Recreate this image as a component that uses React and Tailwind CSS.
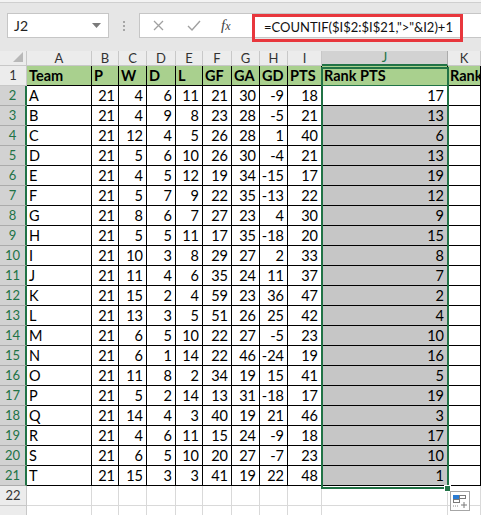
import React from 'react'

const widths = [27, 65, 27, 28, 29, 27, 29, 28, 28, 34, 126, 33]
const letters = ['A', 'B', 'C', 'D', 'E', 'F', 'G', 'H', 'I', 'J', 'K']

const rows = [
  ['A', 21, 4, 6, 11, 21, 30, -9, 18, 17],
  ['B', 21, 4, 9, 8, 23, 28, -5, 21, 13],
  ['C', 21, 12, 4, 5, 26, 28, 1, 40, 6],
  ['D', 21, 5, 6, 10, 26, 30, -4, 21, 13],
  ['E', 21, 4, 5, 12, 19, 34, -15, 17, 19],
  ['F', 21, 5, 7, 9, 22, 35, -13, 22, 12],
  ['G', 21, 8, 6, 7, 27, 23, 4, 30, 9],
  ['H', 21, 5, 5, 11, 17, 35, -18, 20, 15],
  ['I', 21, 10, 3, 8, 29, 27, 2, 33, 8],
  ['J', 21, 11, 4, 6, 35, 24, 11, 37, 7],
  ['K', 21, 15, 2, 4, 59, 23, 36, 47, 2],
  ['L', 21, 13, 3, 5, 51, 26, 25, 42, 4],
  ['M', 21, 6, 5, 10, 22, 27, -5, 23, 10],
  ['N', 21, 6, 1, 14, 22, 46, -24, 19, 16],
  ['O', 21, 11, 8, 2, 34, 19, 15, 41, 5],
  ['P', 21, 5, 2, 14, 13, 31, -18, 17, 19],
  ['Q', 21, 14, 4, 3, 40, 19, 21, 46, 3],
  ['R', 21, 4, 6, 11, 15, 24, -9, 18, 17],
  ['S', 21, 6, 5, 10, 20, 27, -7, 23, 10],
  ['T', 21, 15, 3, 3, 41, 19, 22, 48, 1],
]

const headers = ['Team', 'P', 'W', 'D', 'L', 'GF', 'GA', 'GD', 'PTS', 'Rank PTS', 'Rank']

function Toolbar() {
  return (
    <div className="h-[51px] bg-[#e6e6e6] relative shrink-0">
      <div className="h-[3px] bg-[#f3f3f3] border-b border-[#cfcfcf]" />
      <div className="flex items-start pt-[10px]">
        <div className="ml-[7px] w-[102px] h-[25px] bg-white border border-[#c6c6c6] flex items-center justify-between pl-[6px] pr-[7px]">
          <span className="text-[14px] text-[#222]">J2</span>
          <svg width="9" height="5" viewBox="0 0 9 5"><path d="M0 0h9L4.5 5z" fill="#7a7a7a" /></svg>
        </div>
        <div className="w-[30px] h-[25px] flex flex-col items-center justify-center gap-[2px]">
          <span className="w-[2px] h-[2px] bg-[#a6a6a6]" />
          <span className="w-[2px] h-[2px] bg-[#a6a6a6]" />
          <span className="w-[2px] h-[2px] bg-[#a6a6a6]" />
        </div>
        <div className="flex-1 h-[25px] bg-white border-y border-l border-[#c6c6c6] flex items-center">
          <svg className="ml-[13px]" width="11" height="11" viewBox="0 0 11 11"><path d="M1 1l9 9M10 1l-9 9" stroke="#a0a0a0" strokeWidth="1.3" /></svg>
          <svg className="ml-[23px]" width="14" height="11" viewBox="0 0 14 11"><path d="M1 6l4 4 8-9" stroke="#a0a0a0" strokeWidth="1.4" fill="none" /></svg>
          <span className="ml-[20px] italic text-[15px] text-[#444] [font-family:'Liberation_Serif',serif]">f<span className="text-[12px]">x</span></span>
        </div>
      </div>
      <div className="absolute left-[252px] top-[14px] w-[211px] h-[28px] border-[3px] border-[#e8373d] flex items-center pl-[9px]">
        <span className="text-[13px] text-[#111] whitespace-nowrap">=COUNTIF($I$2:$I$21,"&gt;"&amp;I2)+1</span>
      </div>
    </div>
  )
}

function ColHeaders() {
  return (
    <div className="flex h-[17px]">
      <div className="w-[27px] shrink-0 bg-[#ececec] border-r border-b border-[#c8c8c8] relative">
        <svg className="absolute right-[3px] bottom-[3px]" width="10" height="10" viewBox="0 0 10 10"><path d="M10 0v10H0z" fill="#b8b8b8" /></svg>
      </div>
      {letters.map((l, i) => (
        <div
          key={l}
          style={{ width: widths[i + 1] }}
          className={
            'shrink-0 border-r flex items-center justify-center text-[13px] leading-none ' +
            (l === 'J'
              ? 'bg-[#d2d2d2] border-[#ababab] border-b-2 border-b-[#217346] text-[#217346]'
              : 'bg-[#ececec] border-[#c8c8c8] border-b text-[#333]')
          }
        >
          {l}
        </div>
      ))}
    </div>
  )
}

function RowHeader({ n, selected }) {
  return (
    <div
      className={
        'w-[27px] shrink-0 flex items-center justify-center text-[13px] border-b ' +
        (selected
          ? 'bg-[#d2d2d2] border-[#ababab] border-r-2 border-r-[#217346] text-[#217346]'
          : 'bg-[#ececec] border-[#c8c8c8] border-r text-[#333]')
      }
    >
      {n}
    </div>
  )
}

function TableRow({ n, cells, header }) {
  return (
    <div className="flex h-[20px]">
      <RowHeader n={n} selected={!header} />
      {cells.map((c, i) => {
        const isJ = i === 9
        let bg = 'bg-white'
        if (header) bg = 'bg-[#a9d08e]'
        else if (isJ && n !== 2) bg = 'bg-[#c6c6c6]'
        const align = header || i === 0 ? 'justify-start pl-[2px]' : 'justify-end pr-[3px]'
        const bottom = header && isJ ? 'border-b-[#217346]' : 'border-b-black'
        return (
          <div
            key={i}
            style={{ width: widths[i + 1] }}
            className={
              'shrink-0 flex items-center overflow-hidden whitespace-nowrap border-r border-b border-r-black text-[14.5px] text-black ' +
              bottom + ' ' + bg + ' ' + align + (header ? ' font-bold' : '')
            }
          >
            {c}
          </div>
        )
      })}
    </div>
  )
}

function EmptyRow({ n }) {
  return (
    <div className="flex h-[20px] shrink-0">
      <RowHeader n={n} />
      {widths.slice(1).map((w, i) => (
        <div key={i} style={{ width: w }} className="shrink-0 border-r border-b border-[#d9d9d9]" />
      ))}
    </div>
  )
}

export default function App() {
  return (
    <div className="w-[481px] h-[515px] overflow-hidden bg-white relative flex flex-col [font-family:Lato,'Liberation_Sans',sans-serif]">
      <Toolbar />
      <ColHeaders />
      <TableRow n={1} header cells={headers} />
      {rows.map((r, i) => (
        <TableRow key={i} n={i + 2} cells={[...r, '']} />
      ))}
      <EmptyRow n={22} />
      <EmptyRow n="" />

      <div className="absolute left-[321px] top-[67px] w-[128px] h-[422px] border-2 border-[#217346] pointer-events-none" />
      <div className="absolute left-[444px] top-[485px] w-[7px] h-[7px] bg-[#217346] border border-white" />
      <div className="absolute left-[450px] top-[491px] w-[20px] h-[20px] bg-white border border-[#a6a6a6] flex items-center justify-center">
        <svg width="16" height="14" viewBox="0 0 16 14">
          <rect x="1" y="1" width="6" height="4" fill="#2b7cd3" />
          <rect x="7.5" y="1.5" width="6" height="3" fill="none" stroke="#7a7a7a" />
          <rect x="1.5" y="5.5" width="6" height="3" fill="none" stroke="#7a7a7a" />
          <path d="M1 12h6" stroke="#8a8a8a" strokeDasharray="1 1" />
          <path d="M12 8v6M9 11h6" stroke="#7a7a7a" />
        </svg>
      </div>
    </div>
  )
}
